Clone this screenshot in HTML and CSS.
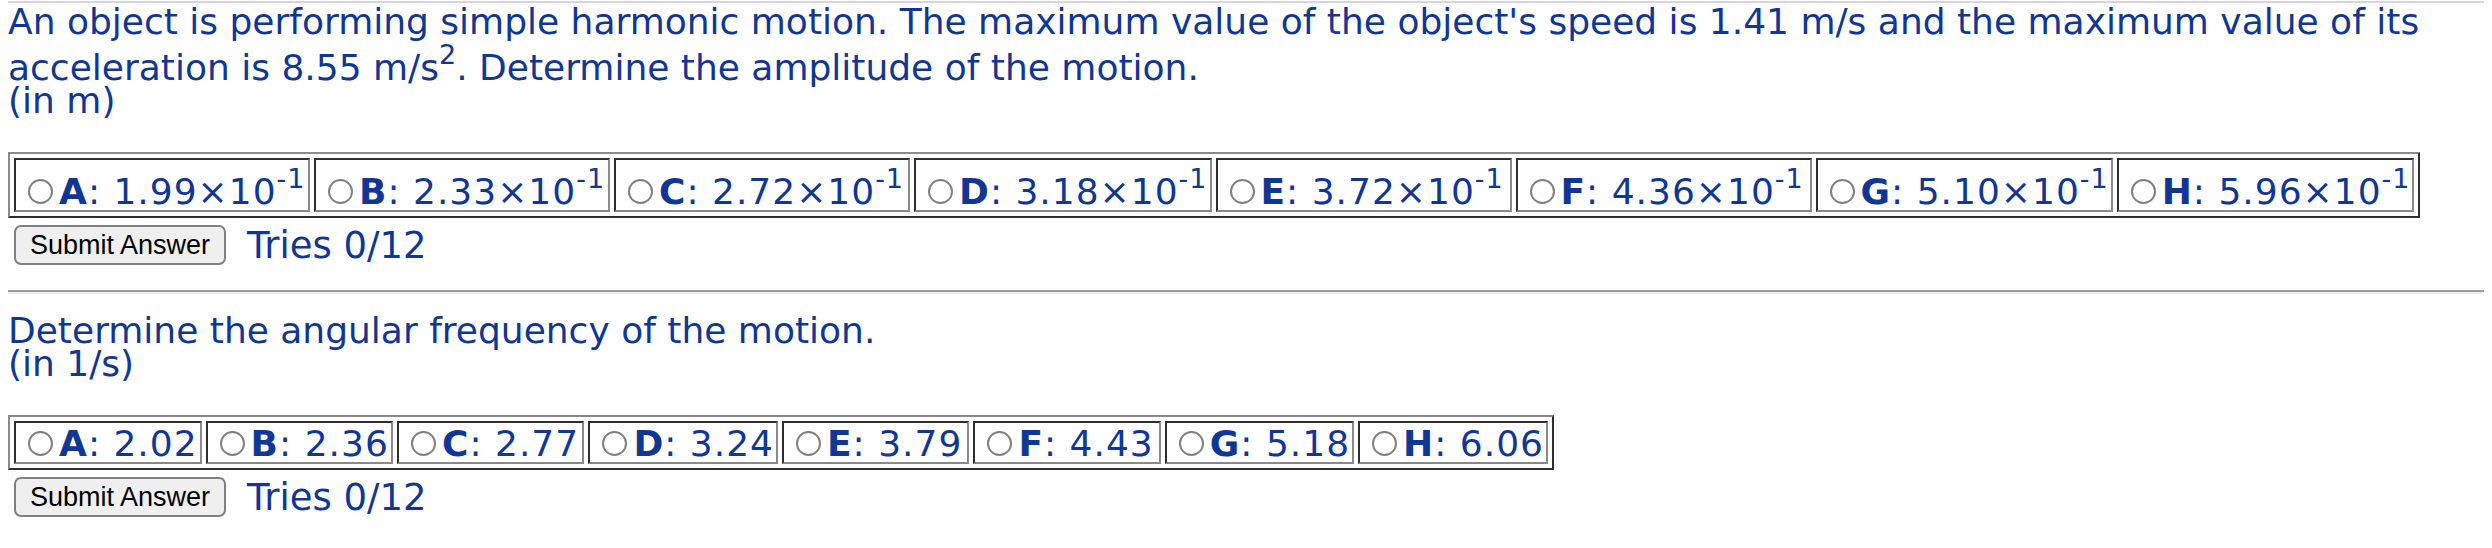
FILE: index.html
```html
<!DOCTYPE html>
<html>
<head>
<meta charset="utf-8">
<title>Simple harmonic motion</title>
<link rel="stylesheet" href="styles.css">
</head>
<body>
<div class="topline"></div>

<div class="problem">
  <div class="question">An object is performing simple harmonic motion. The maximum value of the object's speed is 1.41 m/s and the maximum value of its acceleration is 8.55 m/s<sup>2</sup>. Determine the amplitude of the motion.<br>(in m)</div>
  <table class="choices sci">
    <tr>
      <td><label class="choice"><input class="radio" type="radio" name="q1"><b>A</b>: 1.99×10<sup>-1</sup></label></td>
      <td><label class="choice"><input class="radio" type="radio" name="q1"><b>B</b>: 2.33×10<sup>-1</sup></label></td>
      <td><label class="choice"><input class="radio" type="radio" name="q1"><b>C</b>: 2.72×10<sup>-1</sup></label></td>
      <td><label class="choice"><input class="radio" type="radio" name="q1"><b>D</b>: 3.18×10<sup>-1</sup></label></td>
      <td><label class="choice"><input class="radio" type="radio" name="q1"><b>E</b>: 3.72×10<sup>-1</sup></label></td>
      <td><label class="choice"><input class="radio" type="radio" name="q1"><b>F</b>: 4.36×10<sup>-1</sup></label></td>
      <td><label class="choice"><input class="radio" type="radio" name="q1"><b>G</b>: 5.10×10<sup>-1</sup></label></td>
      <td><label class="choice"><input class="radio" type="radio" name="q1"><b>H</b>: 5.96×10<sup>-1</sup></label></td>
    </tr>
  </table>
  <div class="submit-row">
    <button class="submit" type="button">Submit Answer</button>
    <span class="tries">Tries 0/12</span>
  </div>
</div>

<hr class="divider">

<div class="problem">
  <div class="question">Determine the angular frequency of the motion.<br>(in 1/s)</div>
  <table class="choices num">
    <tr>
      <td><label class="choice"><input class="radio" type="radio" name="q2"><b>A</b>: 2.02</label></td>
      <td><label class="choice"><input class="radio" type="radio" name="q2"><b>B</b>: 2.36</label></td>
      <td><label class="choice"><input class="radio" type="radio" name="q2"><b>C</b>: 2.77</label></td>
      <td><label class="choice"><input class="radio" type="radio" name="q2"><b>D</b>: 3.24</label></td>
      <td><label class="choice"><input class="radio" type="radio" name="q2"><b>E</b>: 3.79</label></td>
      <td><label class="choice"><input class="radio" type="radio" name="q2"><b>F</b>: 4.43</label></td>
      <td><label class="choice"><input class="radio" type="radio" name="q2"><b>G</b>: 5.18</label></td>
      <td><label class="choice"><input class="radio" type="radio" name="q2"><b>H</b>: 6.06</label></td>
    </tr>
  </table>
  <div class="submit-row">
    <button class="submit" type="button">Submit Answer</button>
    <span class="tries">Tries 0/12</span>
  </div>
</div>
</body>
</html>
```

FILE: styles.css
```css
html, body {
  background: #ffffff;
}

body {
  margin: 0 8px;
  font-family: "DejaVu Sans", Verdana, sans-serif;
  font-size: 36px;
  line-height: 33px;
  color: #113694;
}

.topline {
  margin: 1px -8px 0 0;
  border-top: 2px solid #d5d5e7;
}

.question {
  margin-top: 2px;
}

sup {
  font-size: 27px;
  line-height: 34px;
  vertical-align: 16px;
}

.choices {
  margin-top: 35px;
  border-collapse: separate;
  border-spacing: 4px;
  border: 2px solid;
  border-color: #8a8a8a #2e2e2e #2e2e2e #8a8a8a;
  font-size: 36px;
  line-height: 33px;
  color: #113694;
}

.choices td {
  padding: 2px;
  border: 2px solid;
  border-color: #2e2e2e #8a8a8a #8a8a8a #2e2e2e;
  white-space: nowrap;
  text-align: left;
}

.choices.sci td {
  width: 288px;
}

.choices.num td {
  width: 179.4px;
}

.choice {
  letter-spacing: 1px;
}

.choice b {
  font-weight: bold;
}

.radio {
  -webkit-appearance: none;
  appearance: none;
  box-sizing: border-box;
  width: 25px;
  height: 25px;
  margin: 6px 6px 0 10px;
  border: 2px solid #808080;
  border-radius: 50%;
  background: #ffffff;
  vertical-align: baseline;
}

.submit-row {
  display: flex;
  align-items: center;
  gap: 21px;
  margin-top: 7px;
}

.submit {
  box-sizing: border-box;
  height: 40px;
  margin: 0 0 0 6px;
  padding: 0 14px;
  font-family: "Liberation Sans", Arial, sans-serif;
  font-size: 27px;
  line-height: 30px;
  color: #000000;
  background: #efefef;
  border: 2px solid #808080;
  border-radius: 7px;
}

.tries {
  font-size: 37px;
}

.divider {
  height: 0;
  margin: 25px 0 20px;
  border: 0;
  border-top: 2px solid #9c9c9c;
  border-bottom: 2px solid #eeeeee;
}
```
